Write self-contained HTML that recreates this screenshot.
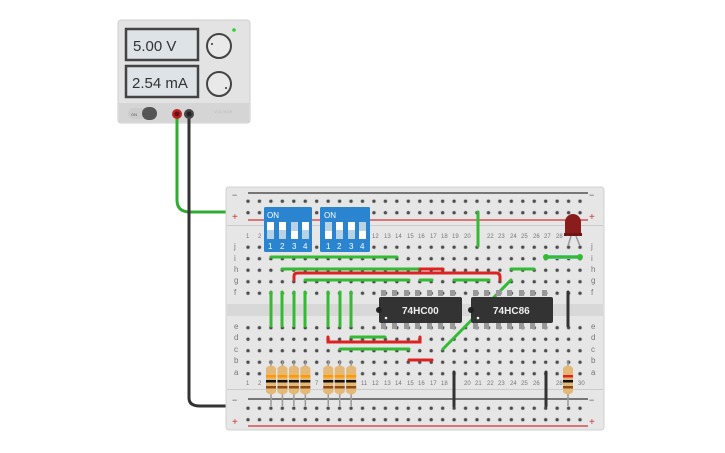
<!DOCTYPE html>
<html><head><meta charset="utf-8"><style>
html,body{margin:0;padding:0;background:#fff;width:725px;height:453px;overflow:hidden}
svg{display:block}
text{font-family:"Liberation Sans",sans-serif}
</style></head><body>
<svg width="725" height="453" viewBox="0 0 725 453" xmlns="http://www.w3.org/2000/svg">
<defs>
<pattern id="h" x="242.3" y="0" width="11.45" height="11.5" patternUnits="userSpaceOnUse">
<circle cx="5.7" cy="5.7" r="2.4" fill="#d4d4d4"/><circle cx="5.7" cy="5.7" r="1.6" fill="#4a4a4a"/>
</pattern>
</defs>
<!-- power supply -->
<rect x="118" y="20" width="132" height="103" rx="3" fill="#e3e3e3" stroke="#cfcfcf"/>
<rect x="119" y="103" width="130" height="19" fill="#d5d5d5"/>
<rect x="126" y="29" width="72" height="31" fill="#dde3e6" stroke="#444" stroke-width="2.5"/>
<rect x="126" y="66" width="72" height="31" fill="#dde3e6" stroke="#444" stroke-width="2.5"/>
<text x="133" y="51" font-size="15" fill="#333">5.00 V</text>
<text x="132" y="88" font-size="15" fill="#333">2.54 mA</text>
<circle cx="219" cy="46" r="12" fill="#e9e9e9" stroke="#444" stroke-width="2"/>
<circle cx="219" cy="84" r="12" fill="#e9e9e9" stroke="#444" stroke-width="2"/>
<circle cx="212" cy="44" r="1" fill="#333"/><circle cx="226" cy="88" r="1" fill="#333"/>
<circle cx="234" cy="30" r="1.8" fill="#3c3"/>
<rect x="128" y="108" width="28" height="11" rx="5.5" fill="#ccc"/>
<rect x="142" y="107" width="15" height="13" rx="6.5" fill="#555"/>
<text x="131" y="116" font-size="4" fill="#555">ON</text>
<text x="214" y="113" font-size="4" fill="#bbb">VOLTAGE</text>
<!-- wires from supply -->
<path d="M177 113 V200 Q177 212 190 212 H248" stroke="#3a3" stroke-width="3" fill="none"/>
<path d="M189 113 V398 Q189 406 200 406 H248" stroke="#333" stroke-width="3" fill="none"/>
<circle cx="177" cy="114" r="5" fill="#b22"/><circle cx="177" cy="114" r="2.5" fill="#611"/>
<circle cx="189" cy="114" r="5" fill="#444"/><circle cx="189" cy="114" r="2.5" fill="#222"/>
<!-- breadboard -->
<rect x="226" y="187" width="378" height="243" rx="3" fill="#e6e6e6" stroke="#d0d0d0"/>
<rect x="227" y="225" width="376" height="1" fill="#ccc"/>
<rect x="227" y="304" width="376" height="12" fill="#d8d8d8"/>
<rect x="227" y="389" width="376" height="1" fill="#ccc"/>
<line x1="248" y1="193" x2="588" y2="193" stroke="#333" stroke-width="1.2"/>
<line x1="248" y1="220" x2="588" y2="220" stroke="#c33" stroke-width="1.2"/>
<line x1="248" y1="399" x2="588" y2="399" stroke="#333" stroke-width="1.2"/>
<line x1="248" y1="426" x2="588" y2="426" stroke="#c33" stroke-width="1.2"/>
<text x="232" y="198" font-size="9" fill="#555">−</text>
<text x="232" y="220" font-size="10" fill="#c33">+</text>
<text x="589" y="198" font-size="9" fill="#555">−</text>
<text x="589" y="220" font-size="10" fill="#c33">+</text>
<text x="232" y="403" font-size="9" fill="#555">−</text>
<text x="232" y="425" font-size="10" fill="#c33">+</text>
<text x="589" y="403" font-size="9" fill="#555">−</text>
<text x="589" y="425" font-size="10" fill="#c33">+</text>
<!-- holes -->
<rect x="242" y="194.3" width="344" height="23" fill="url(#h)"/>
<rect x="242" y="240.3" width="344" height="57.5" fill="url(#h)"/>
<rect x="242" y="320.3" width="344" height="57.5" fill="url(#h)"/>
<rect x="242" y="400.3" width="344" height="23" fill="url(#h)"/>
<!-- row letters -->
<g font-size="8" fill="#777">
<text x="234" y="249">j</text><text x="234" y="261">i</text><text x="234" y="272">h</text><text x="234" y="283">g</text><text x="234" y="295">f</text>
<text x="234" y="329">e</text><text x="234" y="340">d</text><text x="234" y="352">c</text><text x="234" y="363">b</text><text x="234" y="375">a</text>
<text x="591" y="249">j</text><text x="591" y="261">i</text><text x="591" y="272">h</text><text x="591" y="283">g</text><text x="591" y="295">f</text>
<text x="591" y="329">e</text><text x="591" y="340">d</text><text x="591" y="352">c</text><text x="591" y="363">b</text><text x="591" y="375">a</text>
</g>
<g font-size="6" fill="#777">
<text x="246" y="238">1</text><text x="258" y="238">2</text><text x="372" y="238">12</text><text x="384" y="238">13</text><text x="395" y="238">14</text><text x="407" y="238">15</text><text x="418" y="238">16</text><text x="430" y="238">17</text><text x="441" y="238">18</text><text x="452" y="238">19</text><text x="464" y="238">20</text><text x="487" y="238">22</text><text x="498" y="238">23</text><text x="510" y="238">24</text><text x="521" y="238">25</text><text x="533" y="238">26</text><text x="544" y="238">27</text><text x="556" y="238">28</text>
<text x="246" y="385">1</text><text x="258" y="385">2</text><text x="315" y="385">7</text><text x="361" y="385">11</text><text x="372" y="385">12</text><text x="384" y="385">13</text><text x="395" y="385">14</text><text x="407" y="385">15</text><text x="418" y="385">16</text><text x="430" y="385">17</text><text x="441" y="385">18</text><text x="464" y="385">20</text><text x="475" y="385">21</text><text x="487" y="385">22</text><text x="498" y="385">23</text><text x="510" y="385">24</text><text x="521" y="385">25</text><text x="533" y="385">26</text><text x="556" y="385">28</text><text x="578" y="385">30</text>
</g>
<!-- wires top -->
<g stroke-width="3" stroke-linecap="round" fill="none">
<path d="M478 212 V246" stroke="#3b3"/>
<path d="M271 257 H397" stroke="#3b3"/>
<path d="M546 257 H580" stroke="#8cd" stroke-width="4"/>
<path d="M546 257 H580" stroke="#3b3"/>
<path d="M282 269 H420" stroke="#3b3"/>
<path d="M420 269 H443" stroke="#d22"/>
<path d="M511 269 H534" stroke="#3b3"/>
<path d="M294 280 V276 Q294 273 298 273 H496 Q500 273 500 277 V280" stroke="#d22"/>
<path d="M305 280 H409" stroke="#3b3"/>
<path d="M420 280 H432" stroke="#3b3"/>
<path d="M454 280 H489" stroke="#3b3"/>
<path d="M271 292 V326 M282 292 V326 M294 292 V326 M305 292 V326 M328 292 V326 M340 292 V326 M351 292 V326" stroke="#3b3"/>
<path d="M568 292 V326" stroke="#333"/>
<path d="M328 337 V342 H420 V337" stroke="#d22"/>
<path d="M351 337 H385" stroke="#3b3"/>
<path d="M340 349 H409" stroke="#3b3"/>
<path d="M409 360 H432" stroke="#d22"/>
<path d="M454 372 V406 M546 372 V406" stroke="#333"/>
<path d="M511 280 L443 349" stroke="#3b3"/>
</g>
<circle cx="546" cy="257" r="3" fill="#3b3"/><circle cx="580" cy="257" r="3" fill="#3b3"/>
<!-- ICs -->
<g fill="#999">
<path d="M381 290h5v6h-5zM392 290h5v6h-5zM404 290h5v6h-5zM415 290h5v6h-5zM427 290h5v6h-5zM438 290h5v6h-5zM450 290h5v6h-5z"/>
<path d="M381 323h5v6h-5zM392 323h5v6h-5zM404 323h5v6h-5zM415 323h5v6h-5zM427 323h5v6h-5zM438 323h5v6h-5zM450 323h5v6h-5z"/>
<path d="M473 290h5v6h-5zM484 290h5v6h-5zM496 290h5v6h-5zM507 290h5v6h-5zM519 290h5v6h-5zM530 290h5v6h-5zM542 290h5v6h-5z"/>
<path d="M473 323h5v6h-5zM484 323h5v6h-5zM496 323h5v6h-5zM507 323h5v6h-5zM519 323h5v6h-5zM530 323h5v6h-5zM542 323h5v6h-5z"/>
</g>
<rect x="379" y="297" width="83" height="26" rx="2" fill="#333"/>
<rect x="471" y="297" width="82" height="26" rx="2" fill="#333"/>
<circle cx="379" cy="310" r="3" fill="#222"/><circle cx="471" cy="310" r="3" fill="#222"/>
<circle cx="386" cy="318" r="1.3" fill="#eee"/><circle cx="478" cy="318" r="1.3" fill="#eee"/>
<text x="402" y="314" font-size="10" fill="#eee" font-family="Liberation Mono" font-weight="bold">74HC00</text>
<text x="493" y="314" font-size="10" fill="#eee" font-family="Liberation Mono" font-weight="bold">74HC86</text>
<!-- DIP switches -->
<g>
<rect x="264" y="207" width="48" height="45" rx="1.5" fill="#2a84d0"/>
<text x="267" y="218" font-size="8" fill="#fff">ON</text>
<g fill="#b9d3e6"><rect x="267" y="222" width="7" height="17"/><rect x="279" y="222" width="7" height="17"/><rect x="291" y="222" width="7" height="17"/><rect x="302" y="222" width="7" height="17"/></g>
<g fill="#fff"><rect x="267" y="222" width="7" height="8"/><rect x="279" y="222" width="7" height="8"/><rect x="291" y="231" width="7" height="8"/><rect x="302" y="222" width="7" height="8"/></g>
<g font-size="8" fill="#fff"><text x="268" y="249">1</text><text x="280" y="249">2</text><text x="292" y="249">3</text><text x="303" y="249">4</text></g>
<rect x="320" y="207" width="50" height="45" rx="1.5" fill="#2a84d0"/>
<text x="324" y="218" font-size="8" fill="#fff">ON</text>
<g fill="#b9d3e6"><rect x="325" y="222" width="7" height="17"/><rect x="336" y="222" width="7" height="17"/><rect x="348" y="222" width="7" height="17"/><rect x="359" y="222" width="7" height="17"/></g>
<g fill="#fff"><rect x="325" y="231" width="7" height="8"/><rect x="336" y="222" width="7" height="8"/><rect x="348" y="222" width="7" height="8"/><rect x="359" y="231" width="7" height="8"/></g>
<g font-size="8" fill="#fff"><text x="326" y="249">1</text><text x="337" y="249">2</text><text x="349" y="249">3</text><text x="360" y="249">4</text></g>
</g>
<!-- LED -->
<path d="M571 236 L568 246 M576 236 L580 246" stroke="#999" stroke-width="1.5"/>
<path d="M565 235 V222 a8 8 0 0 1 16 0 V235 Z" fill="#8b1c1c"/>
<rect x="564" y="233" width="18" height="3" fill="#6e1515"/>
<!-- resistors -->
<g id="r">
<line x1="271" y1="360" x2="271" y2="406" stroke="#999" stroke-width="1.5"/>
<path d="M266 368 q5 -5 10 0 v24 q-5 5 -10 0z" fill="#e4b877"/>
<rect x="266" y="375" width="10" height="2.5" fill="#f90"/>
<rect x="266" y="380" width="10" height="2.5" fill="#111"/>
<rect x="266" y="386" width="10" height="2.5" fill="#8a4b16"/>
</g>
<use href="#r" x="11.45"/><use href="#r" x="22.9"/><use href="#r" x="34.35"/>
<use href="#r" x="57.25"/><use href="#r" x="68.7"/><use href="#r" x="80.15"/>
<g>
<line x1="568" y1="360" x2="568" y2="406" stroke="#999" stroke-width="1.5"/>
<path d="M563 368 q5 -5 10 0 v24 q-5 5 -10 0z" fill="#e4b877"/>
<rect x="563" y="375" width="10" height="2.5" fill="#d22"/>
<rect x="563" y="380" width="10" height="2.5" fill="#111"/>
<rect x="563" y="386" width="10" height="2.5" fill="#8a4b16"/>
</g>
</svg>
</body></html>
